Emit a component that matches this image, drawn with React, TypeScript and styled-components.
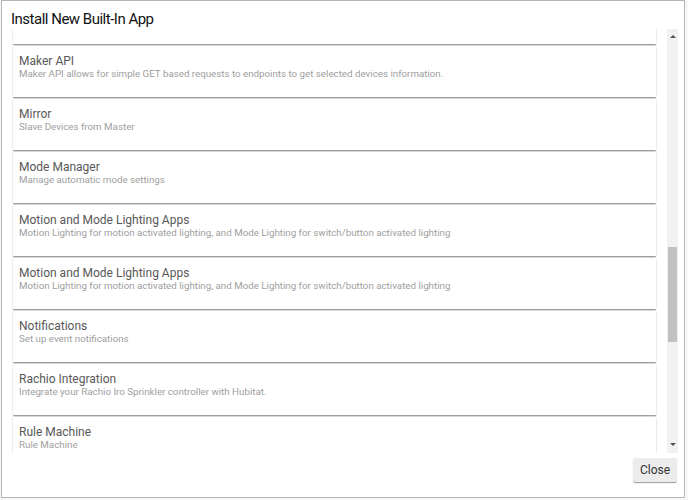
import React from "react";
import styled, { createGlobalStyle } from "styled-components";

const GlobalStyle = createGlobalStyle`
  html, body {
    margin: 0;
    padding: 0;
    background: #f7f7f7;
    font-family: Roboto, "Liberation Sans", Arial, sans-serif;
  }
  * { box-sizing: border-box; }
`;

const Dialog = styled.div`
  margin-left: 1px;
  width: 684px;
  height: 498px;
  background: #ffffff;
  border: 1px solid #b5b5b5;
  display: flex;
  flex-direction: column;
  padding: 0 6px 0 9px;
`;

const Header = styled.div`
  padding-top: 9px;
  height: 28px;
  font-size: 15px;
  line-height: 19px;
  letter-spacing: -0.5px;
  color: #111;
  white-space: nowrap;
  flex-shrink: 0;
`;

const Body = styled.div`
  display: flex;
  height: 424px;
  flex-shrink: 0;
`;

const Viewport = styled.div`
  flex: 1;
  overflow: hidden;
  padding: 0 11px 0 2px;
`;

const List = styled.div<{ $offset: number }>`
  margin-top: ${(p) => -p.$offset}px;
  display: flex;
  flex-direction: column;
  gap: 2px;
`;

const Card = styled.div`
  height: 51px;
  background: #fff;
  padding: 9px 6px 0 6px;
  box-shadow: 0 1px 1px 0 rgba(0, 0, 0, 0.22), 0 2px 0 -0.5px rgba(0, 0, 0, 0.16),
    0 0 2px rgba(0, 0, 0, 0.12);
  flex-shrink: 0;
`;

const CardTitle = styled.div`
  font-size: 12px;
  line-height: 13px;
  color: #585858;
  white-space: nowrap;
`;

const CardDesc = styled.div`
  font-size: 9.75px;
  line-height: 12px;
  color: #9e9e9e;
  white-space: nowrap;
`;

const Scrollbar = styled.div`
  width: 11px;
  background: #f1f1f1;
  display: flex;
  flex-direction: column;
`;

const ArrowButton = styled.div<{ $down?: boolean }>`
  height: 17px;
  display: flex;
  align-items: ${(p) => (p.$down ? "flex-end" : "flex-start")};
  justify-content: center;
  padding: ${(p) => (p.$down ? "0 0 7px" : "6px 0 0")};
  &::after {
    content: "";
    width: 0;
    height: 0;
    border-left: 3px solid transparent;
    border-right: 3px solid transparent;
    ${(p) =>
      p.$down
        ? "border-top: 3px solid #505050;"
        : "border-bottom: 3px solid #505050;"}
  }
`;

const Track = styled.div`
  flex: 1;
  padding: 0 1px;
`;

const Thumb = styled.div`
  width: 9px;
  background: #c1c1c1;
`;

const Footer = styled.div`
  display: flex;
  justify-content: flex-end;
  padding: 5px 1px 0 0;
`;

const CloseButton = styled.button`
  width: 44px;
  height: 24px;
  border: none;
  border-radius: 2px;
  background: #ececec;
  color: #333;
  font-family: Roboto, "Liberation Sans", Arial, sans-serif;
  font-size: 12px;
  line-height: 24px;
  padding: 0;
  box-shadow: 0 1px 1px rgba(0, 0, 0, 0.25), 0 2px 1px -1px rgba(0, 0, 0, 0.2);
  cursor: pointer;
`;

type AppItem = { title?: string; desc?: string };

const apps: AppItem[] = [
  {},
  {
    title: "Maker API",
    desc: "Maker API allows for simple GET based requests to endpoints to get selected devices information.",
  },
  { title: "Mirror", desc: "Slave Devices from Master" },
  { title: "Mode Manager", desc: "Manage automatic mode settings" },
  {
    title: "Motion and Mode Lighting Apps",
    desc: "Motion Lighting for motion activated lighting, and Mode Lighting for switch/button activated lighting",
  },
  {
    title: "Motion and Mode Lighting Apps",
    desc: "Motion Lighting for motion activated lighting, and Mode Lighting for switch/button activated lighting",
  },
  { title: "Notifications", desc: "Set up event notifications" },
  {
    title: "Rachio Integration",
    desc: "Integrate your Rachio Iro Sprinkler controller with Hubitat.",
  },
  { title: "Rule Machine", desc: "Rule Machine" },
];

export default function App() {
  const scrollOffset = 36;
  const thumbTop = 201;
  const thumbHeight = 95;
  return (
    <>
      <GlobalStyle />
      <Dialog>
        <Header>Install New Built-In App</Header>
        <Body>
          <Viewport>
            <List $offset={scrollOffset}>
              {apps.map((a, i) => (
                <Card key={i}>
                  {a.title && <CardTitle>{a.title}</CardTitle>}
                  {a.desc && <CardDesc>{a.desc}</CardDesc>}
                </Card>
              ))}
            </List>
          </Viewport>
          <Scrollbar>
            <ArrowButton />
            <Track>
              <Thumb style={{ marginTop: thumbTop, height: thumbHeight }} />
            </Track>
            <ArrowButton $down />
          </Scrollbar>
        </Body>
        <Footer>
          <CloseButton>Close</CloseButton>
        </Footer>
      </Dialog>
    </>
  );
}
